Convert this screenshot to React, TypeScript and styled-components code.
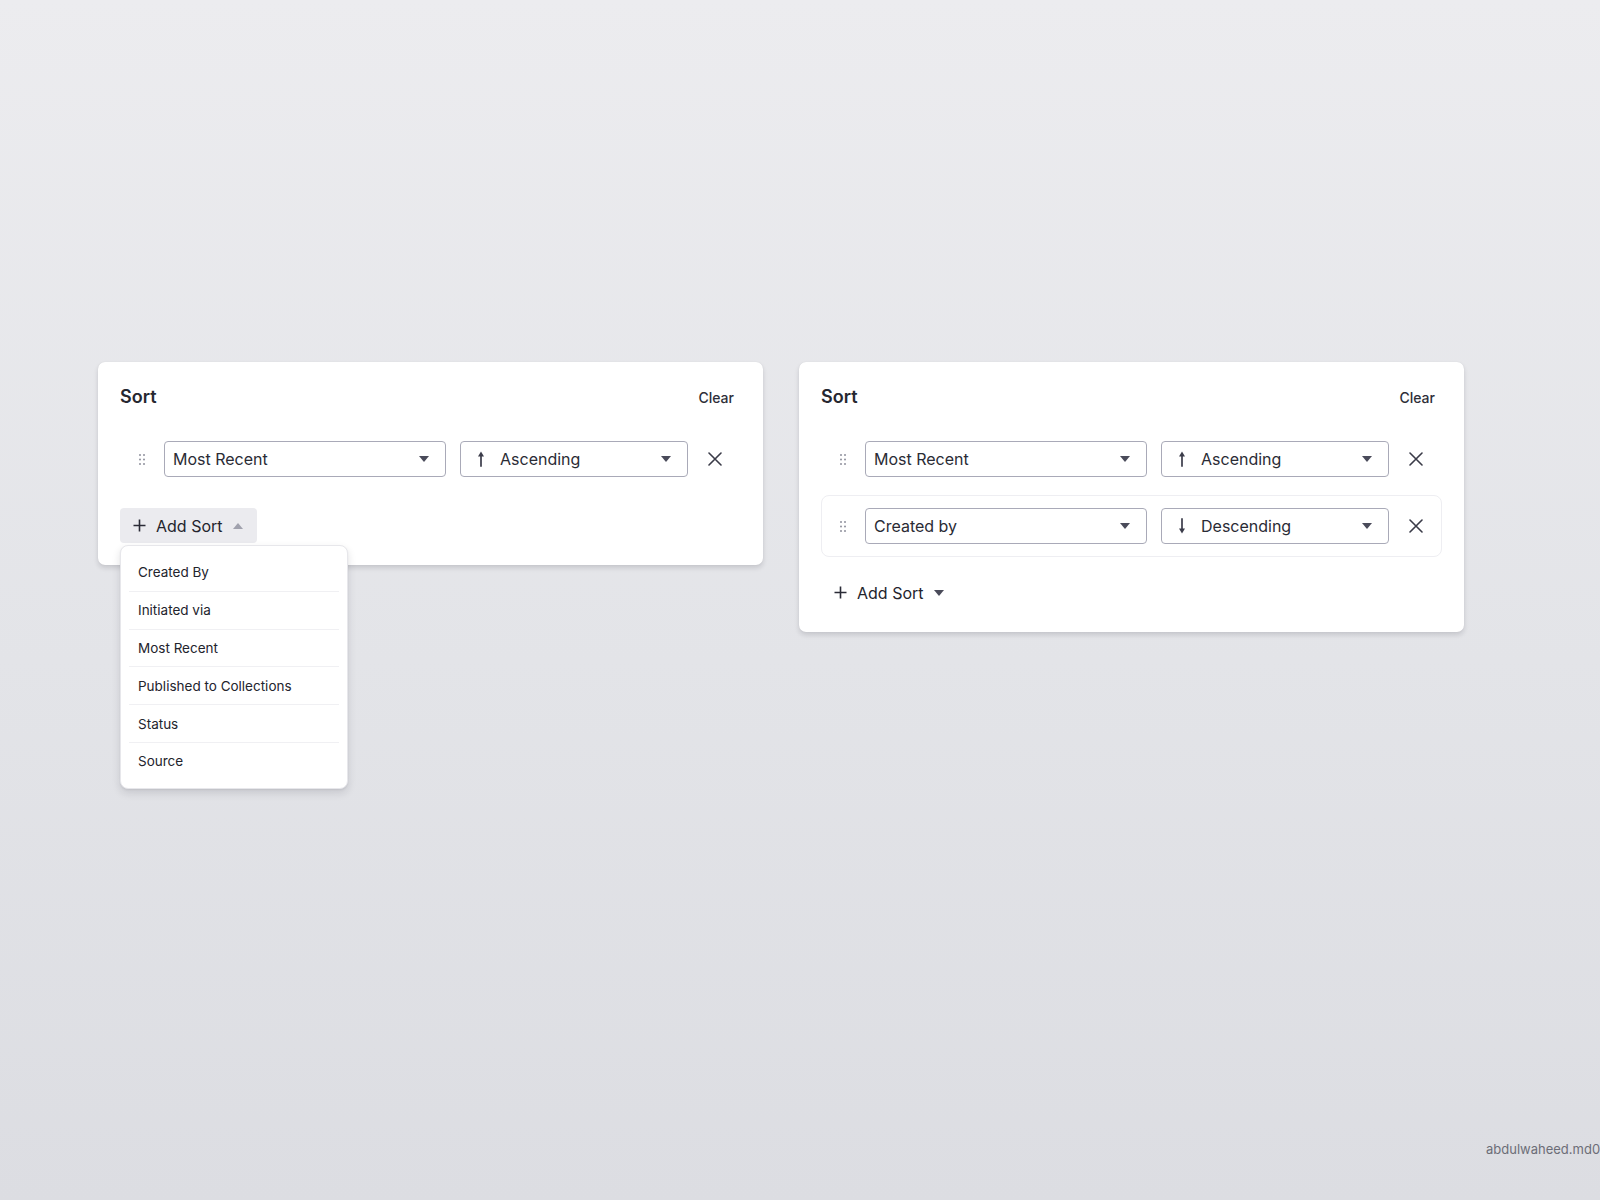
import React from "react";
import styled, { createGlobalStyle } from "styled-components";

const GlobalStyle = createGlobalStyle`
  html, body { margin: 0; padding: 0; }
  body {
    background: linear-gradient(180deg, #ececef 0%, #e3e4e8 55%, #dcdde2 100%);
    font-family: Inter, "Noto Sans", "Liberation Sans", sans-serif;
    color: #1f2029;
    overflow: hidden;
  }
  * { box-sizing: border-box; }
`;

const Page = styled.div`
  position: relative;
  width: 1600px;
  height: 1200px;
  display: flex;
  align-items: flex-start;
  gap: 36px;
  padding: 362px 0 0 98px;
`;

const Panel = styled.section`
  width: 665px;
  background: #ffffff;
  border-radius: 7px;
  padding: 22px;
  display: flex;
  flex-direction: column;
  box-shadow: 0 3px 5px rgba(20, 22, 35, 0.14), 0 0 1px rgba(20, 22, 35, 0.1);
`;

const Header = styled.div`
  height: 26px;
  display: flex;
  align-items: center;
  justify-content: space-between;
`;

const Title = styled.h2`
  margin: 0;
  font-size: 18px;
  line-height: 26px;
  font-weight: 600;
  color: #262730;
`;

const ClearButton = styled.button`
  font-family: inherit;
  font-size: 14px;
  font-weight: 500;
  color: #2e2f38;
  background: none;
  border: none;
  padding: 4px 7px;
  cursor: pointer;
`;

const Rows = styled.div`
  margin-top: 18px;
  display: flex;
  flex-direction: column;
  gap: 5px;
`;

const Row = styled.div<{ $framed?: boolean }>`
  height: 62px;
  display: flex;
  align-items: center;
  padding: 0 18px 0 18px;
  border-radius: 8px;
  border: 1px solid ${(p) => (p.$framed ? "#eeeef2" : "transparent")};
`;

const HandleIcon = styled.svg`
  width: 6px;
  height: 11px;
  margin-right: 19px;
  flex: none;
`;

const Select = styled.div<{ $w: number }>`
  width: ${(p) => p.$w}px;
  height: 36px;
  flex: none;
  display: flex;
  align-items: center;
  border: 1px solid #a9aab8;
  border-radius: 4px;
  padding: 0 16px 0 8px;
  background: #fff;
  & + & {
    margin-left: 14px;
  }
`;

const SelectLabel = styled.span`
  flex: 1;
  font-size: 16px;
  color: #2a2b35;
  white-space: nowrap;
`;

const DirIcon = styled.svg`
  width: 20px;
  height: 16px;
  margin-left: 2px;
  margin-right: 9px;
  flex: none;
`;

const Caret = styled.svg<{ $muted?: boolean }>`
  width: 10px;
  height: 6px;
  flex: none;
  fill: ${(p) => (p.$muted ? "#a0a1ad" : "#4a4b5a")};
`;

const RemoveButton = styled.button`
  margin-left: 20px;
  width: 14px;
  height: 14px;
  padding: 0;
  border: none;
  background: none;
  display: flex;
  cursor: pointer;
`;

const AddWrap = styled.div`
  position: relative;
  margin-top: 18px;
  align-self: flex-start;
`;

const AddButton = styled.button<{ $open?: boolean }>`
  height: 35px;
  display: flex;
  align-items: center;
  padding: 0 14px 0 13px;
  border: none;
  border-radius: 4px;
  background: ${(p) => (p.$open ? "#ebebef" : "transparent")};
  font-family: inherit;
  font-size: 16px;
  color: #23242d;
  cursor: pointer;
`;

const PlusIcon = styled.svg`
  width: 13px;
  height: 13px;
  margin-right: 10px;
`;

const AddLabel = styled.span`
  margin-right: 10px;
`;

const Menu = styled.ul`
  position: absolute;
  top: calc(100% + 2px);
  left: 0;
  width: 228px;
  margin: 0;
  padding: 8px;
  list-style: none;
  background: #fff;
  border: 1px solid #e7e7eb;
  border-radius: 8px;
  box-shadow: 0 4px 8px rgba(20, 22, 35, 0.13), 0 1px 2px rgba(20, 22, 35, 0.06);
  z-index: 5;
`;

const MenuItem = styled.li`
  height: 37.8px;
  display: flex;
  align-items: center;
  padding: 0 9px;
  font-size: 13.5px;
  color: #23242d;
  border-bottom: 1px solid #f0f0f3;
  &:last-child {
    border-bottom: none;
    height: 37px;
  }
`;

const Watermark = styled.div`
  position: absolute;
  left: 1486px;
  top: 1141px;
  font-size: 13px;
  line-height: 16px;
  color: #6c6d77;
  white-space: nowrap;
`;

const Handle = () => (
  <HandleIcon viewBox="0 0 6 11">
    {[1, 5.5, 10].map((y) =>
      [1, 5].map((x) => <circle key={`${x}-${y}`} cx={x} cy={y} r="1" fill="#8f909d" />)
    )}
  </HandleIcon>
);

const Direction = ({ up }: { up: boolean }) => (
  <DirIcon viewBox="0 0 20 16">
    {up ? (
      <>
        <path d="M10 15.8V3" stroke="#3b3c4a" strokeWidth="1.7" />
        <path d="M7 5.4 L10 0.6 L13 5.4 Z" fill="#3b3c4a" />
      </>
    ) : (
      <>
        <path d="M10 0.2V13" stroke="#3b3c4a" strokeWidth="1.7" />
        <path d="M7 10.6 L10 15.4 L13 10.6 Z" fill="#3b3c4a" />
      </>
    )}
  </DirIcon>
);

const CaretDown = ({ muted }: { muted?: boolean }) => (
  <Caret viewBox="0 0 10 6" $muted={muted}>
    <path d="M0 0 H10 L5 6 Z" />
  </Caret>
);

const CaretUp = ({ muted }: { muted?: boolean }) => (
  <Caret viewBox="0 0 10 6" $muted={muted}>
    <path d="M0 6 H10 L5 0 Z" />
  </Caret>
);

const Close = () => (
  <svg width="14" height="14" viewBox="0 0 14 14">
    <path d="M1 1 L13 13 M13 1 L1 13" stroke="#3a3b48" strokeWidth="1.6" strokeLinecap="round" />
  </svg>
);

type SortRule = { field: string; up: boolean };

const SortRow = ({ rule, framed }: { rule: SortRule; framed?: boolean }) => (
  <Row $framed={framed}>
    <Handle />
    <Select $w={282}>
      <SelectLabel>{rule.field}</SelectLabel>
      <CaretDown />
    </Select>
    <Select $w={228}>
      <Direction up={rule.up} />
      <SelectLabel>{rule.up ? "Ascending" : "Descending"}</SelectLabel>
      <CaretDown />
    </Select>
    <RemoveButton aria-label="Remove">
      <Close />
    </RemoveButton>
  </Row>
);

const menuOptions = [
  "Created By",
  "Initiated via",
  "Most Recent",
  "Published to Collections",
  "Status",
  "Source",
];

const SortPanel = ({ rules, open }: { rules: SortRule[]; open?: boolean }) => (
  <Panel>
    <Header>
      <Title>Sort</Title>
      <ClearButton>Clear</ClearButton>
    </Header>
    <Rows>
      {rules.map((r, i) => (
        <SortRow key={i} rule={r} framed={i > 0} />
      ))}
    </Rows>
    <AddWrap>
      <AddButton $open={open}>
        <PlusIcon viewBox="0 0 13 13">
          <path d="M6.5 0.5V12.5 M0.5 6.5H12.5" stroke="#2a2b36" strokeWidth="1.6" />
        </PlusIcon>
        <AddLabel>Add Sort</AddLabel>
        {open ? <CaretUp muted /> : <CaretDown />}
      </AddButton>
      {open && (
        <Menu>
          {menuOptions.map((o) => (
            <MenuItem key={o}>{o}</MenuItem>
          ))}
        </Menu>
      )}
    </AddWrap>
  </Panel>
);

export default function App() {
  return (
    <>
      <GlobalStyle />
      <Page>
        <SortPanel rules={[{ field: "Most Recent", up: true }]} open />
        <SortPanel
          rules={[
            { field: "Most Recent", up: true },
            { field: "Created by", up: false },
          ]}
        />
        <Watermark>abdulwaheed.md0</Watermark>
      </Page>
    </>
  );
}
